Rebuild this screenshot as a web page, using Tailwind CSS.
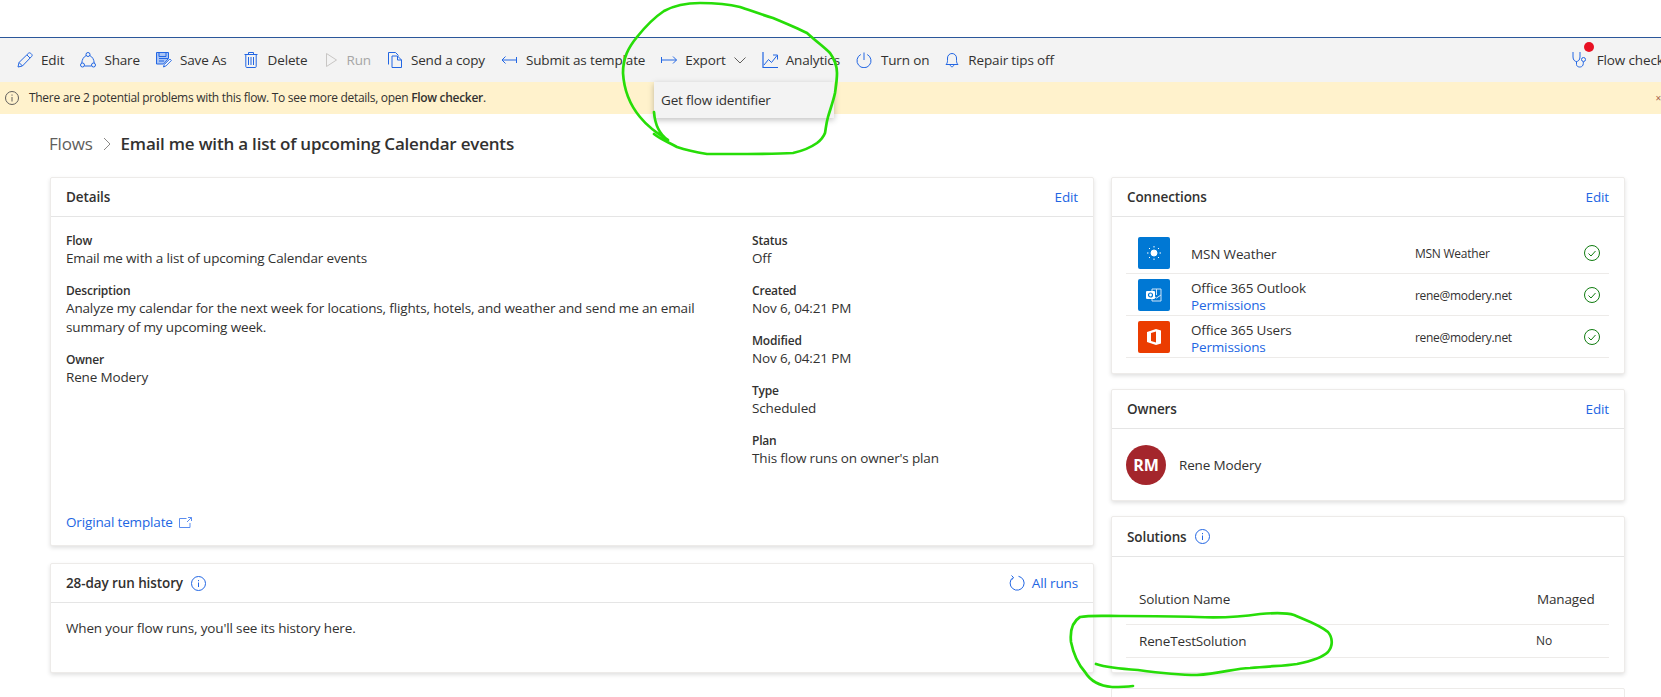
<!DOCTYPE html>
<html>
<head>
<meta charset="utf-8">
<script src="https://cdn.jsdelivr.net/npm/@tailwindcss/browser@4"></script>
</head>
<body class="bg-white">
<div class="relative w-[1661px] h-[697px] overflow-hidden bg-white text-[#323130] font-['Open_Sans',sans-serif] text-[13.5px] tracking-[-0.15px] leading-[18px]">
  <div class="h-[37px] border-b border-[#2b579a] box-content"></div>
  <div class="h-[44px] bg-[#f3f3f3] flex items-center gap-[16px] px-[17px] whitespace-nowrap overflow-hidden">
    <div class="flex items-center gap-[8px]"><svg class="w-4 h-4 shrink-0" viewBox="0 0 16 16" fill="none" stroke="#2266e3"><path d="M1 15l1-4.500L11.500 1.200c.6-.6 1.600-.5 2.200.1l1 1c.6.6.6 1.500 0 2.100L5.400 14z"/><path d="M2 10.500l3.500 3.500M10 3l3 3"/></svg><span>Edit</span></div>
    <div class="flex items-center gap-[8px]"><svg class="w-4 h-4 shrink-0" viewBox="0 0 16 16" fill="none" stroke="#2266e3"><circle cx="8" cy="2.500" r="2"/><circle cx="2.500" cy="13" r="2"/><circle cx="13.500" cy="13" r="2"/><path d="M6.200 3.500C3.500 5 2 7.500 1.800 11M9.800 3.500c2.700 1.500 4.200 4 4.400 7.500M4.500 14h7"/></svg><span>Share</span></div>
    <div class="flex items-center gap-[8px]"><svg class="w-4 h-4 shrink-0" viewBox="0 0 16 16" fill="none" stroke="#2266e3"><path d="M.5.500h12v6l-5 5.500H.5z" fill="#a9c4f5"/><path d="M3 1v3.500h7V1M3 6.500h9M3 9h5"/><path d="M7.500 15l.8-2.500 5.500-5.500 1.500 1.500L9.800 14z" fill="#fff"/></svg><span>Save As</span></div>
    <div class="flex items-center gap-[9px]"><svg class="w-4 h-4 shrink-0" viewBox="0 0 16 16" fill="none" stroke="#2266e3"><path d="M1.500 2.500h13M5.500 2.500V.5h5v2M2.800 2.500v12c0 .6.400 1 1 1h8.400c.6 0 1-.4 1-1v-12"/><path d="M5.500 5v8M8 5v8M10.500 5v8"/></svg><span>Delete</span></div>
    <div class="flex items-center gap-[7px] text-[#a6a6a6]"><svg class="w-4 h-4 shrink-0" viewBox="0 0 16 16" fill="none" stroke="#c8c6c4"><path d="M3.500 1.500l10 6.500-10 6.500z"/></svg><span>Run</span></div>
    <div class="flex items-center gap-[8px]"><svg class="w-4 h-4 shrink-0" viewBox="0 0 16 16" fill="none" stroke="#2266e3"><path d="M1.500 12.500V.5h7l3 3"/><path d="M5 4h5.500L14.500 8v7.500H5zM10.500 4v4h4"/></svg><span>Send a copy</span></div>
    <div class="flex items-center gap-[9px]"><svg class="w-4 h-4 shrink-0" viewBox="0 0 16 16" fill="none" stroke="#2266e3"><path d="M15.500 8H1M4.500 4.500L1 8l3.500 3.500M15.500 5v6"/></svg><span>Submit as template</span></div>
    <div class="flex items-center gap-[8px]"><svg class="w-4 h-4 shrink-0" viewBox="0 0 16 16" fill="none" stroke="#2266e3"><path d="M.5 5v6M1 8h14.500M12 4.500L15.500 8 12 11.500"/></svg><span>Export</span><svg class="w-3 h-3 shrink-0" viewBox="0 0 12 12" fill="none" stroke="#605e5c"><path d="M.5 3.500L6 9l5.500-5.500"/></svg></div>
    <div class="flex items-center gap-[8px]"><svg class="w-4 h-4 shrink-0" viewBox="0 0 16 16" fill="none" stroke="#2266e3"><path d="M1 0v15.500h15" stroke-width="1.200"/><path d="M2 13l4.500-5.500 3 3L15 3.500M11 3h4.500v4.500"/></svg><span>Analytics</span></div>
    <div class="flex items-center gap-[9px]"><svg class="w-4 h-4 shrink-0" viewBox="0 0 16 16" fill="none" stroke="#2266e3"><path d="M8 .5V8M4.800 2.500a7 7 0 1 0 6.400 0"/></svg><span>Turn on</span></div>
    <div class="flex items-center gap-[9px]"><svg class="w-3.5 h-4 shrink-0" viewBox="0 0 14 16" fill="none" stroke="#2266e3"><path d="M1 12.500c1-1 1.500-2 1.500-4V6a4.500 4.500 0 0 1 9 0v2.500c0 2 .5 3 1.500 4zM5.200 12.500c0 3 3.600 3 3.600 0"/></svg><span>Repair tips off</span></div>
    <div class="relative flex items-center gap-[7px] ml-[502px] shrink-0"><svg class="w-[18px] h-[18px] shrink-0" viewBox="0 0 18 18" fill="none" stroke="#2266e3"><path d="M1 1v5c0 3 2 4.500 3.500 4.500S8 9 8 6V1"/><path d="M4.500 10.500v3c0 3 5.500 3.500 6.500.5.400-1 .3-2 .3-3"/><circle cx="11.500" cy="8.500" r="2"/></svg><span>Flow checker</span><span class="absolute left-[12px] top-[-9px] w-[10px] h-[10px] rounded-full bg-[#e81123]"></span></div>
  </div>
  <div class="relative h-[32px] bg-[#fff2cc] flex items-center pl-[5px] gap-[10px] text-[12px] tracking-[-0.3px]">
    <svg class="w-[14px] h-[14px] shrink-0" viewBox="0 0 14 14" fill="none" stroke="#605e5c"><circle cx="7" cy="7" r="6.500"/><path d="M7 6v4.500M7 3.500v1.200"/></svg>
    <span>There are 2 potential problems with this flow. To see more details, open <span class="font-semibold">Flow checker</span>.</span>
    <span class="absolute right-0 top-[7px] text-[10px] text-[#a4614a]">×</span>
  </div>
  <div class="absolute left-[654px] top-[82px] w-[180px] h-[36px] bg-[#f3f3f3] shadow-[0_2px_6px_rgba(0,0,0,0.25)] flex items-center pl-[7px]">Get flow identifier</div>
  <div class="h-[63px] pb-[3px] flex items-center pl-[49px] text-[17px] tracking-[-0.2px]"><span class="text-[#605e5c]">Flows</span><svg class="w-[8px] h-[14px] mx-[10px]" viewBox="0 0 8 14" fill="none" stroke="#8a8886"><path d="M1 1l6 6-6 6"/></svg><span class="font-semibold">Email me with a list of upcoming Calendar events</span></div>
  <div class="flex gap-[17px] pl-[50px] items-start">
    <div class="w-[1044px] flex flex-col gap-[17px]">
      <div class="h-[369px] bg-white rounded-[2px] border border-[#edebe9] shadow-[0_2px_4px_rgba(0,0,0,0.12)] flex flex-col">
        <div class="h-[39px] shrink-0 border-b border-[#e5e5e5] flex items-center justify-between px-[15px]"><span class="font-semibold tracking-[-0.1px]">Details</span><span class="text-[#2266e3]">Edit</span></div>
        <div class="flex-1 flex flex-col px-[15px] pt-[16px] pb-[14px]">
          <div class="flex-1 flex">
            <div class="w-[686px] flex flex-col gap-[15.5px]">
              <div><div class="text-[12px] leading-[16px] font-semibold tracking-[-0.2px]">Flow</div><div>Email me with a list of upcoming Calendar events</div></div>
              <div><div class="text-[12px] leading-[16px] font-semibold tracking-[-0.2px]">Description</div><div class="w-[640px] leading-[19px]">Analyze my calendar for the next week for locations, flights, hotels, and weather and send me an email summary of my upcoming week.</div></div>
              <div><div class="text-[12px] leading-[16px] font-semibold tracking-[-0.2px]">Owner</div><div>Rene Modery</div></div>
            </div>
            <div class="flex flex-col gap-[16px]">
              <div><div class="text-[12px] leading-[16px] font-semibold tracking-[-0.2px]">Status</div><div>Off</div></div>
              <div><div class="text-[12px] leading-[16px] font-semibold tracking-[-0.2px]">Created</div><div>Nov 6, 04:21 PM</div></div>
              <div><div class="text-[12px] leading-[16px] font-semibold tracking-[-0.2px]">Modified</div><div>Nov 6, 04:21 PM</div></div>
              <div><div class="text-[12px] leading-[16px] font-semibold tracking-[-0.2px]">Type</div><div>Scheduled</div></div>
              <div><div class="text-[12px] leading-[16px] font-semibold tracking-[-0.2px]">Plan</div><div>This flow runs on owner's plan</div></div>
            </div>
          </div>
          <div class="flex items-center gap-[6px] text-[#2266e3]"><span>Original template</span><svg class="w-[13px] h-[11px]" viewBox="0 0 13 11" fill="none" stroke="#5b8def"><path d="M7.500 1.500H.5v9h10.500V6M9 .5h3.500V4M12.500.5L8 5"/></svg></div>
        </div>
      </div>
      <div class="h-[110px] bg-white rounded-[2px] border border-[#edebe9] shadow-[0_2px_4px_rgba(0,0,0,0.12)]">
        <div class="h-[39px] border-b border-[#e5e5e5] flex items-center justify-between px-[15px]"><div class="flex items-center gap-[8px]"><span class="font-semibold tracking-[-0.1px]">28-day run history</span><svg class="w-[15px] h-[15px]" viewBox="0 0 15 15" fill="none" stroke="#2266e3"><circle cx="7.500" cy="7.500" r="7"/><path d="M7.500 6.500v4.500M7.500 4v1.200"/></svg></div><div class="flex items-center gap-[7px] text-[#2266e3]"><svg class="w-[16px] h-[16px]" viewBox="0 0 16 16" fill="none" stroke="#2266e3"><path d="M9.500 1.300A7 7 0 1 1 4 2.500M2.500 .5L4.500 2.500 2.800 4.800"/></svg><span>All runs</span></div></div>
        <div class="px-[15px] pt-[16px]">When your flow runs, you'll see its history here.</div>
      </div>
    </div>
    <div class="w-[514px] flex flex-col gap-[15px]">
      <div class="h-[197px] bg-white rounded-[2px] border border-[#edebe9] shadow-[0_2px_4px_rgba(0,0,0,0.12)]">
        <div class="h-[39px] border-b border-[#e5e5e5] flex items-center justify-between px-[15px]"><span class="font-semibold tracking-[-0.1px]">Connections</span><span class="text-[#2266e3]">Edit</span></div>
        <div class="pl-[14px] pr-[15px] pt-[15px]">
          <div class="h-[42px] border-b border-[#edebe9] flex items-center pl-[12px] pr-[9px]">
            <div class="w-[32px] h-[32px] rounded-[2px] bg-[#0078d4] flex items-center justify-center shrink-0"><svg class="w-[14px] h-[14px]" viewBox="0 0 14 14" fill="#fff" stroke="#fff"><circle cx="7" cy="7" r="3"/><path d="M7 0v1.500M7 12.500V14M0 7h1.500M12.500 7H14M2 2l1 1M11 11l1 1M2 12l1-1M11 3l1-1"/></svg></div>
            <div class="w-[224px] ml-[21px] pt-[3px]">MSN Weather</div><div class="flex-1 text-[12px] tracking-[-0.25px] pt-[3px]">MSN Weather</div>
            <svg class="w-[16px] h-[16px]" viewBox="0 0 16 16" fill="none" stroke="#107c10"><circle cx="8" cy="8" r="7.500"/><path d="M4.500 8.500l2.500 2.500 4.500-5"/></svg>
          </div>
          <div class="h-[42px] border-b border-[#edebe9] flex items-center pl-[12px] pr-[9px]">
            <div class="w-[32px] h-[32px] rounded-[2px] bg-[#0078d4] flex items-center justify-center shrink-0"><svg class="w-[16px] h-[14px]" viewBox="0 0 16 14"><path d="M6 1h9v12H6z" fill="none" stroke="#cfe4f7"/><path d="M6 7l4.500 3L15 7M10.500 1v6" fill="none" stroke="#cfe4f7"/><rect x="0" y="3" width="9" height="8" rx="1" fill="#fff"/><circle cx="4.500" cy="7" r="2" fill="none" stroke="#0078d4" stroke-width="1.200"/></svg></div>
            <div class="w-[224px] ml-[21px] leading-[17px] pt-[4px]"><div>Office 365 Outlook</div><div class="text-[#2266e3]">Permissions</div></div><div class="flex-1 text-[12px] tracking-[-0.3px] pt-[3px]">rene@modery.net</div>
            <svg class="w-[16px] h-[16px]" viewBox="0 0 16 16" fill="none" stroke="#107c10"><circle cx="8" cy="8" r="7.500"/><path d="M4.500 8.500l2.500 2.500 4.500-5"/></svg>
          </div>
          <div class="h-[42px] border-b border-[#edebe9] flex items-center pl-[12px] pr-[9px]">
            <div class="w-[32px] h-[32px] rounded-[2px] bg-[#eb3c00] flex items-center justify-center shrink-0"><svg class="w-[14px] h-[16px]" viewBox="0 0 14 16"><path fill-rule="evenodd" d="M0 3l9-3 5 1.500v13L9 16 0 13zM9 2.500L4 4v8l5 1.500z" fill="#fff"/></svg></div>
            <div class="w-[224px] ml-[21px] leading-[17px] pt-[4px]"><div>Office 365 Users</div><div class="text-[#2266e3]">Permissions</div></div><div class="flex-1 text-[12px] tracking-[-0.3px] pt-[3px]">rene@modery.net</div>
            <svg class="w-[16px] h-[16px]" viewBox="0 0 16 16" fill="none" stroke="#107c10"><circle cx="8" cy="8" r="7.500"/><path d="M4.500 8.500l2.500 2.500 4.500-5"/></svg>
          </div>
        </div>
      </div>
      <div class="h-[112px] bg-white rounded-[2px] border border-[#edebe9] shadow-[0_2px_4px_rgba(0,0,0,0.12)]">
        <div class="h-[39px] border-b border-[#e5e5e5] flex items-center justify-between px-[15px]"><span class="font-semibold tracking-[-0.1px]">Owners</span><span class="text-[#2266e3]">Edit</span></div>
        <div class="flex items-center pl-[14px] pt-[16px] gap-[13px]"><div class="w-[40px] h-[40px] rounded-full bg-[#a4262c] text-white font-bold text-[16px] tracking-normal flex items-center justify-center">RM</div><span>Rene Modery</span></div>
      </div>
      <div class="h-[157px] bg-white rounded-[2px] border border-[#edebe9] shadow-[0_2px_4px_rgba(0,0,0,0.12)]">
        <div class="h-[40px] border-b border-[#e5e5e5] flex items-center gap-[8px] px-[15px]"><span class="font-semibold tracking-[-0.1px]">Solutions</span><svg class="w-[15px] h-[15px]" viewBox="0 0 15 15" fill="none" stroke="#2266e3"><circle cx="7.500" cy="7.500" r="7"/><path d="M7.500 6.500v4.500M7.500 4v1.200"/></svg></div>
        <div class="pl-[14px] pr-[15px] pt-[12px]">
          <div class="h-[56px] pt-[4px] border-b border-[#edebe9] flex items-center pl-[13px] font-medium"><span class="w-[398px]">Solution Name</span><span>Managed</span></div>
          <div class="h-[33px] border-b border-[#edebe9] flex items-center pl-[13px]"><span class="w-[397px]">ReneTestSolution</span><span class="text-[12px]">No</span></div>
        </div>
      </div>
      <div class="h-[60px] bg-white rounded-[2px] border border-[#edebe9]"></div>
    </div>
  </div>
  <svg class="absolute left-0 top-0 w-[1661px] h-[697px] pointer-events-none" viewBox="0 0 1661 697" fill="none" stroke="#27dd08" stroke-width="2.700" stroke-linecap="round" stroke-linejoin="round">
    <path d="M654 112C655 125 659 134 668 140C658 134 648 127 640 117C630 105 624 90 623 73C623 58 628 48 637 37C645 27 652 19 664 11C675 5 688 3 700 3C715 3 728 4 740 7C752 11 763 15 773 18C785 23 797 28 807 33C817 42 825 48 830 53C835 60 837 66 837 73C837 80 836 86 835 93C833 102 830 110 828 117C826 124 826 128 825 133C823 138 821 140 817 143C810 148 802 151 793 153C780 154 765 154 747 154C730 154 718 154 707 154C695 152 686 150 677 147C668 142 660 139 654 134"/>
    <path d="M1096 664C1108 668 1122 669 1138 670C1160 673 1178 675 1197 675C1220 674 1235 668 1250 668C1270 666 1285 666 1297 664C1312 661 1322 658 1328 652C1333 646 1333 638 1328 632C1320 625 1308 621 1294 615C1285 612 1272 613 1260 614C1240 617 1220 618 1197 617C1170 616 1145 616 1123 616C1105 616 1090 615 1080 617C1072 622 1070 632 1071 642C1073 652 1077 663 1085 672C1091 682 1100 686 1112 687C1118 687 1125 687 1133 686"/>
  </svg>
</div>
</body>
</html>
